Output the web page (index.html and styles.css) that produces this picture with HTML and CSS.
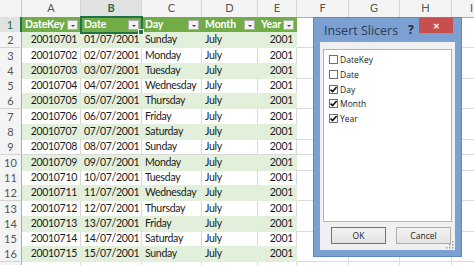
FILE: index.html
```html
<!DOCTYPE html>
<html>
<head>
<meta charset="utf-8">
<link rel="stylesheet" href="styles.css">
</head>
<body>
<div class="sheet">
  <div class="row colheads">
    <div class="corner"></div>
    <div class="ch">A</div><div class="ch sel">B</div><div class="ch">C</div><div class="ch">D</div><div class="ch">E</div><div class="ch">F</div><div class="ch">G</div><div class="ch">H</div><div class="ch">I</div>
  </div>
  <div class="row">
    <div class="rh selrow">1</div>
    <div class="c th">DateKey<span class="dd"></span></div>
    <div class="c th active">Date<span class="dd"></span><span class="handle"></span></div>
    <div class="c th">Day<span class="dd"></span></div>
    <div class="c th">Month<span class="dd"></span></div>
    <div class="c th">Year<span class="dd"></span></div>
    <div class="c"></div><div class="c"></div><div class="c"></div><div class="c"></div>
  </div>
  <div class="row band"><div class="rh">2</div><div class="c r">20010701</div><div class="c r">01/07/2001</div><div class="c">Sunday</div><div class="c">July</div><div class="c r">2001</div><div class="c g"></div><div class="c g"></div><div class="c g"></div><div class="c g"></div></div>
  <div class="row"><div class="rh">3</div><div class="c r">20010702</div><div class="c r">02/07/2001</div><div class="c">Monday</div><div class="c">July</div><div class="c r">2001</div><div class="c g"></div><div class="c g"></div><div class="c g"></div><div class="c g"></div></div>
  <div class="row band"><div class="rh">4</div><div class="c r">20010703</div><div class="c r">03/07/2001</div><div class="c">Tuesday</div><div class="c">July</div><div class="c r">2001</div><div class="c g"></div><div class="c g"></div><div class="c g"></div><div class="c g"></div></div>
  <div class="row"><div class="rh">5</div><div class="c r">20010704</div><div class="c r">04/07/2001</div><div class="c">Wednesday</div><div class="c">July</div><div class="c r">2001</div><div class="c g"></div><div class="c g"></div><div class="c g"></div><div class="c g"></div></div>
  <div class="row band"><div class="rh">6</div><div class="c r">20010705</div><div class="c r">05/07/2001</div><div class="c">Thursday</div><div class="c">July</div><div class="c r">2001</div><div class="c g"></div><div class="c g"></div><div class="c g"></div><div class="c g"></div></div>
  <div class="row"><div class="rh">7</div><div class="c r">20010706</div><div class="c r">06/07/2001</div><div class="c">Friday</div><div class="c">July</div><div class="c r">2001</div><div class="c g"></div><div class="c g"></div><div class="c g"></div><div class="c g"></div></div>
  <div class="row band"><div class="rh">8</div><div class="c r">20010707</div><div class="c r">07/07/2001</div><div class="c">Saturday</div><div class="c">July</div><div class="c r">2001</div><div class="c g"></div><div class="c g"></div><div class="c g"></div><div class="c g"></div></div>
  <div class="row"><div class="rh">9</div><div class="c r">20010708</div><div class="c r">08/07/2001</div><div class="c">Sunday</div><div class="c">July</div><div class="c r">2001</div><div class="c g"></div><div class="c g"></div><div class="c g"></div><div class="c g"></div></div>
  <div class="row band"><div class="rh">10</div><div class="c r">20010709</div><div class="c r">09/07/2001</div><div class="c">Monday</div><div class="c">July</div><div class="c r">2001</div><div class="c g"></div><div class="c g"></div><div class="c g"></div><div class="c g"></div></div>
  <div class="row"><div class="rh">11</div><div class="c r">20010710</div><div class="c r">10/07/2001</div><div class="c">Tuesday</div><div class="c">July</div><div class="c r">2001</div><div class="c g"></div><div class="c g"></div><div class="c g"></div><div class="c g"></div></div>
  <div class="row band"><div class="rh">12</div><div class="c r">20010711</div><div class="c r">11/07/2001</div><div class="c">Wednesday</div><div class="c">July</div><div class="c r">2001</div><div class="c g"></div><div class="c g"></div><div class="c g"></div><div class="c g"></div></div>
  <div class="row"><div class="rh">13</div><div class="c r">20010712</div><div class="c r">12/07/2001</div><div class="c">Thursday</div><div class="c">July</div><div class="c r">2001</div><div class="c g"></div><div class="c g"></div><div class="c g"></div><div class="c g"></div></div>
  <div class="row band"><div class="rh">14</div><div class="c r">20010713</div><div class="c r">13/07/2001</div><div class="c">Friday</div><div class="c">July</div><div class="c r">2001</div><div class="c g"></div><div class="c g"></div><div class="c g"></div><div class="c g"></div></div>
  <div class="row"><div class="rh">15</div><div class="c r">20010714</div><div class="c r">14/07/2001</div><div class="c">Saturday</div><div class="c">July</div><div class="c r">2001</div><div class="c g"></div><div class="c g"></div><div class="c g"></div><div class="c g"></div></div>
  <div class="row band"><div class="rh">16</div><div class="c r">20010715</div><div class="c r">15/07/2001</div><div class="c">Sunday</div><div class="c">July</div><div class="c r">2001</div><div class="c g"></div><div class="c g"></div><div class="c g"></div><div class="c g"></div></div>
  <div class="row"><div class="rh"></div><div class="c"></div><div class="c"></div><div class="c"></div><div class="c"></div><div class="c"></div><div class="c"></div><div class="c"></div><div class="c"></div><div class="c"></div></div>
</div>

<div class="dialog">
  <div class="titlebar">
    <span class="title">Insert Slicers</span>
    <span class="help">?</span>
    <span class="close">&#x2715;</span>
  </div>
  <div class="client">
    <div class="list">
      <label class="item"><span class="cb"></span>DateKey</label>
      <label class="item"><span class="cb"></span>Date</label>
      <label class="item"><span class="cb on"><svg viewBox="0 0 9 9"><path d="M1.6 4.6 L3.6 6.6 L7.6 2" fill="none" stroke="#111" stroke-width="1.6"/></svg></span>Day</label>
      <label class="item"><span class="cb on"><svg viewBox="0 0 9 9"><path d="M1.6 4.6 L3.6 6.6 L7.6 2" fill="none" stroke="#111" stroke-width="1.6"/></svg></span>Month</label>
      <label class="item"><span class="cb on"><svg viewBox="0 0 9 9"><path d="M1.6 4.6 L3.6 6.6 L7.6 2" fill="none" stroke="#111" stroke-width="1.6"/></svg></span>Year</label>
    </div>
    <div class="buttons">
      <span class="btn default">OK</span>
      <span class="btn">Cancel</span>
    </div>
    <svg class="grip" viewBox="0 0 8 8"><g fill="#a0a0a0"><rect x="6" y="0" width="1.5" height="1.5"/><rect x="3" y="3" width="1.5" height="1.5"/><rect x="6" y="3" width="1.5" height="1.5"/><rect x="0" y="6" width="1.5" height="1.5"/><rect x="3" y="6" width="1.5" height="1.5"/><rect x="6" y="6" width="1.5" height="1.5"/></g></svg>
  </div>
</div>
</body>
</html>
```

FILE: styles.css
```css
html, body {
  margin: 0;
  padding: 0;
  background: #ffffff;
  overflow: hidden;
}
body {
  width: 474px;
  height: 265px;
  position: relative;
  font-family: Lato, "Liberation Sans", sans-serif;
}
.sheet {
  display: flex;
  flex-direction: column;
}
.row {
  display: grid;
  grid-template-columns: 22px 59px 61px 60px 56px 39px 52px 51px 52px 40px;
  height: 15.3px;
}
.colheads {
  height: 17px;
  background: #f4f4f4;
}
.corner {
  border-right: 1px solid #c6c6c6;
  border-bottom: 1px solid #ababab;
  background: #f4f4f4;
}
.ch {
  box-sizing: border-box;
  border-right: 1px solid #d4d4d4;
  border-bottom: 1px solid #ababab;
  color: #555;
  font-size: 11px;
  text-align: center;
  line-height: 16px;
}
.ch.sel {
  background: #e1e1e1;
  color: #217346;
  font-weight: 700;
  border-bottom: 2px solid #217346;
}
.rh {
  box-sizing: border-box;
  background: #f4f4f4;
  border-right: 1px solid #ababab;
  border-bottom: 1px solid #d4d4d4;
  color: #555;
  font-size: 11px;
  text-align: center;
  line-height: 15px;
}
.rh.selrow {
  background: #e1e1e1;
  color: #2a6a44;
  border-right: 2px solid #217346;
}
.c {
  box-sizing: border-box;
  border-right: 1px solid #d9d9d9;
  border-bottom: 1px solid #d9d9d9;
  font-size: 10.5px;
  letter-spacing: -0.3px;
  color: #1a1a1a;
  line-height: 14.5px;
  padding: 0 3px;
  white-space: nowrap;
  overflow: hidden;
  position: relative;
}
.c.r {
  text-align: right;
  padding-right: 3px;
}
.band .c {
  background: #e2efda;
  border-color: #e2efda;
}
.band .c.g {
  background: #ffffff;
  border-color: #d9d9d9;
}
.c.th {
  background: #70ad47;
  border-color: #70ad47;
  color: #ffffff;
  font-weight: 700;
  letter-spacing: -0.1px;
  overflow: visible;
}
.c.th.active {
  outline: 2px solid #217346;
  outline-offset: -1px;
  z-index: 2;
}
.dd {
  position: absolute;
  right: 2px;
  top: 3px;
  width: 11px;
  height: 10px;
  box-sizing: border-box;
  background: #f2f2f2;
  border: 1px solid #b0b0b0;
}
.dd::after {
  content: "";
  position: absolute;
  left: 2.5px;
  top: 3.5px;
  border-left: 2px solid transparent;
  border-right: 2px solid transparent;
  border-top: 2px solid #444;
}
.handle {
  position: absolute;
  right: -3px;
  bottom: -3px;
  width: 4px;
  height: 4px;
  background: #217346;
  border: 1px solid #fff;
  z-index: 3;
}

/* dialog */
.dialog {
  position: absolute;
  left: 313px;
  top: 17px;
  width: 149px;
  height: 240px;
  box-sizing: border-box;
  background: #7ca0d2;
  border: 1px solid #5f86bf;
  padding: 0 6px 6px 6px;
  display: flex;
  flex-direction: column;
  font-family: "Open Sans", "Noto Sans", sans-serif;
  z-index: 10;
}
.titlebar {
  height: 24px;
  display: flex;
  align-items: center;
  position: relative;
}
.title {
  font-size: 12.5px;
  color: #2a3a58;
  margin-left: 4px;
  margin-top: 1px;
}
.help {
  position: absolute;
  left: 88px;
  top: 3px;
  font-weight: 700;
  font-size: 12px;
  color: #1c2a44;
}
.close {
  position: absolute;
  right: 2px;
  top: 0;
  width: 34px;
  height: 15px;
  background: #c84f4f;
  color: #fff;
  font-size: 8px;
  font-weight: 700;
  text-align: center;
  line-height: 15px;
}
.client {
  flex: 1;
  background: #f0f0f0;
  padding: 7px 3px 0 3px;
  position: relative;
  display: flex;
  flex-direction: column;
}
.list {
  height: 173px;
  box-sizing: border-box;
  background: #ffffff;
  border: 1px solid #b4b4b4;
  padding: 5px 0 0 5px;
  display: flex;
  flex-direction: column;
  gap: 5px;
}
.item {
  display: flex;
  align-items: center;
  gap: 2px;
  font-size: 8.5px;
  color: #222;
  height: 9.7px;
}
.cb {
  width: 9px;
  height: 9px;
  box-sizing: border-box;
  border: 1px solid #707070;
  background: #fff;
  display: flex;
}
.cb svg {
  width: 9px;
  height: 9px;
  margin: -1px;
}
.buttons {
  display: flex;
  justify-content: space-between;
  padding: 5px 1px 0 8px;
}
.btn {
  width: 55px;
  height: 17px;
  box-sizing: border-box;
  border: 1px solid #adadad;
  background: linear-gradient(#f2f2f2, #e4e4e4);
  font-size: 8.5px;
  color: #222;
  text-align: center;
  line-height: 15px;
}
.btn.default {
  border-color: #3c7fb1;
}
.grip {
  position: absolute;
  right: 1px;
  bottom: 1px;
  width: 8px;
  height: 8px;
}
```
